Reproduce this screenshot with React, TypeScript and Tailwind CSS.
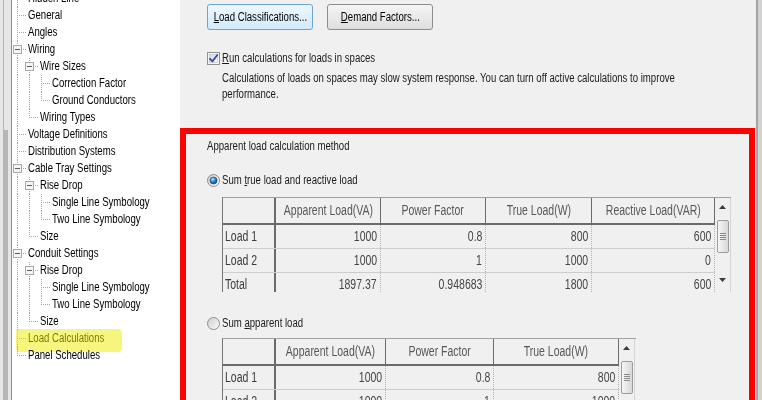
import React from "react";

const F = "font-['Liberation_Sans',Arial,sans-serif]";

function T({ children, o = "l", s }: { children: React.ReactNode; o?: "l" | "c" | "r"; s?: boolean }) {
  const oc = o === "l" ? "origin-left" : o === "r" ? "origin-right" : "origin-center";
  const sc = s ? "scale-x-[0.75]" : "scale-x-[0.8]";
  return <span className={`inline-block whitespace-nowrap ${sc} ${oc}`}>{children}</span>;
}

type Item = { label: string; d: number; box?: boolean; last?: boolean; cont: boolean[]; hl?: boolean };

const items: Item[] = [
  { label: "Hidden Line", d: 0, cont: [] },
  { label: "General", d: 0, cont: [] },
  { label: "Angles", d: 0, cont: [] },
  { label: "Wiring", d: 0, box: true, cont: [] },
  { label: "Wire Sizes", d: 1, box: true, cont: [true] },
  { label: "Correction Factor", d: 2, cont: [true, true] },
  { label: "Ground Conductors", d: 2, last: true, cont: [true, true] },
  { label: "Wiring Types", d: 1, last: true, cont: [true] },
  { label: "Voltage Definitions", d: 0, cont: [] },
  { label: "Distribution Systems", d: 0, cont: [] },
  { label: "Cable Tray Settings", d: 0, box: true, cont: [] },
  { label: "Rise Drop", d: 1, box: true, cont: [true] },
  { label: "Single Line Symbology", d: 2, cont: [true, true] },
  { label: "Two Line Symbology", d: 2, last: true, cont: [true, true] },
  { label: "Size", d: 1, last: true, cont: [true] },
  { label: "Conduit Settings", d: 0, box: true, cont: [] },
  { label: "Rise Drop", d: 1, box: true, cont: [true] },
  { label: "Single Line Symbology", d: 2, cont: [true, true] },
  { label: "Two Line Symbology", d: 2, last: true, cont: [true, true] },
  { label: "Size", d: 1, last: true, cont: [true] },
  { label: "Load Calculations", d: 0, cont: [], hl: true },
  { label: "Panel Schedules", d: 0, last: true, cont: [] },
];

function Guides({ it }: { it: Item }) {
  const w = 16 + 12 * it.d;
  const cx = 5.5 + 12 * it.d;
  const lines: React.ReactNode[] = [];
  it.cont.forEach((c, L) => {
    if (c) lines.push(<line key={"c" + L} x1={5.5 + 12 * L} y1={0} x2={5.5 + 12 * L} y2={17} />);
  });
  lines.push(<line key="v" x1={cx} y1={0} x2={cx} y2={it.last ? 8.5 : 17} />);
  lines.push(<line key="h" x1={5 + 12 * it.d} y1={8.5} x2={w - 1} y2={8.5} />);
  return (
    <svg width={w} height={17} className="shrink-0 block">
      <g stroke="#a3a3a3" strokeWidth={1} strokeDasharray="1 1">
        {lines}
      </g>
      {it.box && (
        <g>
          <rect x={cx - 4} y={4.5} width={8} height={8} fill="#f5f5f5" stroke="#a9a9a9" />
          <line x1={cx - 2.5} y1={8.5} x2={cx + 2.5} y2={8.5} stroke="#5c5c5c" />
        </g>
      )}
    </svg>
  );
}

function Tree() {
  return (
    <div className="w-[168px] h-full shrink-0 bg-white overflow-hidden">
      <div className="-mt-[10px]">
        {items.map((it, i) => (
          <div key={i} className="relative flex h-[17px] items-center">
            <Guides it={it} />
            <span className="leading-[17px] text-black">
              <T>{it.label}</T>
            </span>
            {it.hl && (
              <div className="absolute left-[4px] -top-[1px] h-[23px] w-[106px] rounded-[4px] bg-[#eded00]/50 blur-[0.6px]" />
            )}
          </div>
        ))}
      </div>
    </div>
  );
}

function LeftStrip() {
  return (
    <div className="w-[12px] h-full shrink-0 flex bg-[#e6e6e6] border-r border-[#8e8e8e]">
      <div className="ml-[3px] w-[5px] h-full flex flex-col">
        <div className="h-[130px] border-l border-[#b4b4b4]" />
        <div className="flex-1 bg-[#b6b6b6]" />
      </div>
    </div>
  );
}

function RightStrip() {
  return (
    <div className="w-[7px] h-full shrink-0 flex">
      <div className="w-[1px] bg-[#ececec]" />
      <div className="w-[2px] bg-[#a5a5a5]" />
      <div className="flex-1 bg-[#d2d2d2]" />
    </div>
  );
}

function Checkbox() {
  return (
    <svg width="13" height="13" viewBox="0 0 13 13" className="shrink-0 block">
      <defs>
        <linearGradient id="cbg" x1="0" y1="0" x2="1" y2="1">
          <stop offset="0" stopColor="#d8d9db" />
          <stop offset="1" stopColor="#fbfbfb" />
        </linearGradient>
      </defs>
      <rect x="0.5" y="0.5" width="12" height="12" fill="#f6f6f6" stroke="#8e8f8f" />
      <rect x="2.5" y="2.5" width="8" height="8" fill="url(#cbg)" stroke="#b9bcc0" strokeWidth="0.6" />
      <path d="M3 6.8 L5.4 9.4 L10.3 3" fill="none" stroke="#2d4f9e" strokeWidth="1.8" strokeLinecap="round" strokeLinejoin="round" />
    </svg>
  );
}

function Radio({ on, id }: { on?: boolean; id: string }) {
  return (
    <svg width="13" height="13" viewBox="0 0 13 13" className="shrink-0 block">
      <defs>
        <linearGradient id={id + "o"} x1="0" y1="0" x2="1" y2="1">
          <stop offset="0" stopColor="#cdcdcd" />
          <stop offset="1" stopColor="#fdfdfd" />
        </linearGradient>
        <radialGradient id={id + "i"} cx="0.4" cy="0.35" r="0.7">
          <stop offset="0" stopColor="#c6ecff" />
          <stop offset="0.45" stopColor="#2f8bd0" />
          <stop offset="1" stopColor="#0b3a6c" />
        </radialGradient>
      </defs>
      <circle cx="6.5" cy="6.5" r="6" fill={`url(#${id}o)`} stroke="#8e8f8f" />
      {on && <circle cx="6.5" cy="6.5" r="3.6" fill={`url(#${id}i)`} stroke="#1c3f66" strokeWidth="0.5" />}
    </svg>
  );
}

function VScroll({ showDown }: { showDown?: boolean }) {
  return (
    <div className="w-[16px] shrink-0 flex flex-col items-center border-r border-[#d4d4d4] bg-[#f0f0f0]">
      <div className="h-[17px] w-full shrink-0 flex items-center justify-center">
        <svg width="7" height="4" className="block">
          <path d="M0 4 L3.5 0 L7 4 Z" fill="#3c3c3c" />
        </svg>
      </div>
      <div className="mt-[5px] h-[33px] w-[12px] shrink-0 rounded-[2px] border border-[#9c9c9c] bg-linear-to-r from-[#f6f6f6] to-[#d8d8d8] flex flex-col items-center justify-center gap-[1px]">
        <div className="w-[6px] h-px bg-[#8a8a8a]" />
        <div className="w-[6px] h-px bg-[#8a8a8a]" />
        <div className="w-[6px] h-px bg-[#8a8a8a]" />
        <div className="w-[6px] h-px bg-[#8a8a8a]" />
      </div>
      <div className="flex-1" />
      {showDown && (
        <div className="h-[24px] w-full shrink-0 flex items-center justify-center">
          <svg width="7" height="4" className="block">
            <path d="M0 0 L3.5 4 L7 0 Z" fill="#3c3c3c" />
          </svg>
        </div>
      )}
    </div>
  );
}

function Grid({
  widths,
  headers,
  rows,
  hClass,
  showDown,
}: {
  widths: string[];
  headers: string[];
  rows: string[][];
  hClass: string;
  showDown?: boolean;
}) {
  return (
    <div className={`flex overflow-hidden border-t border-[#a0a0a0] border-l border-l-[#767676] text-[14px] ${hClass}`}>
      <div className="flex flex-col">
        <div className="flex h-[27px] shrink-0 border-b-2 border-[#6b6b6b]">
          {headers.map((h, i) => (
            <div
              key={i}
              className={`${widths[i]} shrink-0 flex items-center justify-center text-[#585858] border-[#6b6b6b] ${
                i === 0 ? "border-r-2" : "border-r"
              }`}
            >
              <T o="c" s>
                {h}
              </T>
            </div>
          ))}
        </div>
        {rows.map((r, ri) => (
          <div key={ri} className="flex h-[24px] shrink-0 border-b border-[#cdcdcd]">
            <div className={`${widths[0]} shrink-0 border-r-2 border-[#6b6b6b] pl-[2px] flex items-center text-[#3c3c3c]`}>
              <T s>{r[0]}</T>
            </div>
            {r.slice(1).map((v, ci) => (
              <div
                key={ci}
                className={`${widths[ci + 1]} shrink-0 border-r border-dotted border-[#b4b4b4] flex items-center justify-end pr-[3px] text-[#464646]`}
              >
                <T o="r" s>
                  {v}
                </T>
              </div>
            ))}
          </div>
        ))}
      </div>
      <VScroll showDown={showDown} />
    </div>
  );
}

function RightPane() {
  return (
    <div className="w-[575px] h-full shrink-0 flex flex-col text-[12px] text-[#1a1a1a]">
      <div className="h-[128px] shrink-0 pl-[27px] pt-[4px]">
        <div className="flex gap-[14px]">
          <button className="h-[26px] w-[106px] rounded-[3px] border border-[#6aa3d6] bg-linear-to-b from-[#edf7fe] to-[#d2eafb] text-black flex items-center justify-center">
            <T o="c">
              <span className="underline">L</span>oad Classifications...
            </T>
          </button>
          <button className="h-[26px] w-[106px] rounded-[3px] border border-[#8c8c8c] bg-linear-to-b from-[#f5f5f5] to-[#dedede] text-black flex items-center justify-center">
            <T o="c">
              <span className="underline">D</span>emand Factors...
            </T>
          </button>
        </div>
        <div className="mt-[20px] flex items-center h-[16px]">
          <Checkbox />
          <span className="ml-[2px] leading-[16px]">
            <T>
              <span className="underline">R</span>un calculations for loads in spaces
            </T>
          </span>
        </div>
        <div className="mt-[4px] pl-[15px] leading-[16px]">
          <div>
            <T>Calculations of loads on spaces may slow system response. You can turn off active calculations to improve</T>
          </div>
          <div>
            <T>performance.</T>
          </div>
        </div>
      </div>
      <div className="flex-1 border-[6px] border-b-0 border-[#ff0000] pl-[21px] pt-[4px]">
        <div className="leading-[16px]">
          <T>Apparent load calculation method</T>
        </div>
        <div className="mt-[18px] flex items-center h-[16px]">
          <Radio on id="r1" />
          <span className="ml-[2px] leading-[16px]">
            <T>
              Sum <span className="underline">t</span>rue load and reactive load
            </T>
          </span>
        </div>
        <div className="mt-[9px] ml-[15px]">
          <Grid
            widths={["w-[53px]", "w-[105px]", "w-[105px]", "w-[106px]", "w-[123px]"]}
            headers={["", "Apparent Load(VA)", "Power Factor", "True Load(W)", "Reactive Load(VAR)"]}
            rows={[
              ["Load 1", "1000", "0.8", "800", "600"],
              ["Load 2", "1000", "1", "1000", "0"],
              ["Total", "1897.37", "0.948683", "1800", "600"],
            ]}
            hClass="h-[95px] w-[509px]"
            showDown
          />
        </div>
        <div className="mt-[23px] flex items-center h-[16px]">
          <Radio id="r2" />
          <span className="ml-[2px] leading-[16px]">
            <T>
              Sum <span className="underline">a</span>pparent load
            </T>
          </span>
        </div>
        <div className="mt-[7px] ml-[15px]">
          <Grid
            widths={["w-[53px]", "w-[110px]", "w-[108px]", "w-[125px]"]}
            headers={["", "Apparent Load(VA)", "Power Factor", "True Load(W)"]}
            rows={[
              ["Load 1", "1000", "0.8", "800"],
              ["Load 2", "1000", "1", "1000"],
            ]}
            hClass="h-[90px] w-[414px]"
          />
        </div>
      </div>
    </div>
  );
}

export default function App() {
  return (
    <div className={`w-[762px] h-[400px] overflow-hidden flex bg-[#f0f0f0] text-[12px] ${F}`}>
      <LeftStrip />
      <Tree />
      <RightPane />
      <RightStrip />
    </div>
  );
}
